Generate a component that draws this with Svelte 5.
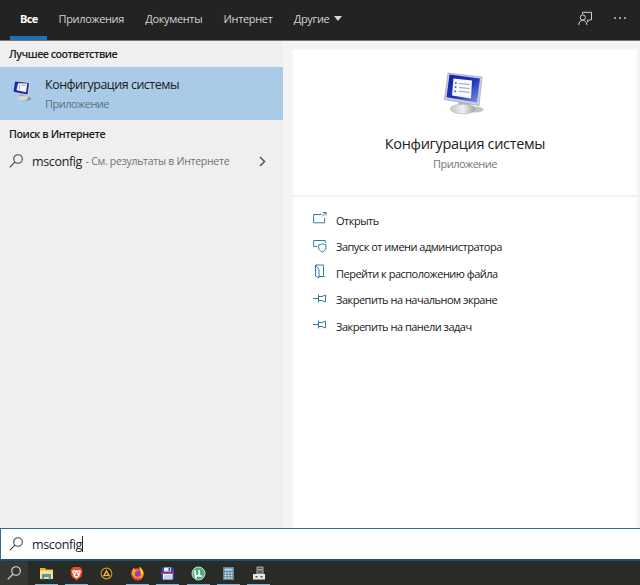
<script>
  const tabs = ['Приложения', 'Документы', 'Интернет'];

  const actions = [
    { icon: 'open', label: 'Открыть' },
    { icon: 'shield', label: 'Запуск от имени администратора' },
    { icon: 'folder', label: 'Перейти к расположению файла' },
    { icon: 'pin', label: 'Закрепить на начальном экране' },
    { icon: 'pin', label: 'Закрепить на панели задач' }
  ];

  const apps = [
    { name: 'explorer', running: true },
    { name: 'brave', running: true },
    { name: 'aimp', running: false },
    { name: 'firefox', running: true },
    { name: 'commander', running: true },
    { name: 'utorrent', running: true },
    { name: 'calc', running: true },
    { name: 'usb', running: true }
  ];
</script>

{#snippet magnifier(size)}
  <svg class="magnifier" width={size} height={size} viewBox="0 0 14 14">
    <circle cx="9" cy="5" r="4.3" />
    <path d="M5.9 8.1 .7 13.3" />
  </svg>
{/snippet}

<div class="search">
  <header>
    <nav>
      <span class="tab active">Все</span>
      {#each tabs as tab}
        <span class="tab">{tab}</span>
      {/each}
      <span class="tab more">Другие <i></i></span>
    </nav>
    <div class="tools">
      <svg width="15" height="15" viewBox="0 0 15 15">
        <path d="M4.5 3.5V1.3h9v7.4H12l-2.300 2V8.300" />
        <circle cx="4.800" cy="6.500" r="2.600" />
        <path d="M.7 14c.2-3 1.800-4.700 4.100-4.700S8.700 11 8.900 14" />
      </svg>
      <svg class="dots" width="14" height="4" viewBox="0 0 14 4">
        <circle cx="2" cy="2" r=".9" /><circle cx="7" cy="2" r=".9" /><circle cx="12" cy="2" r=".9" />
      </svg>
    </div>
  </header>

  <main>
    <section class="results">
      <h3>Лучшее соответствие</h3>
      <div class="result selected">
        <svg class="small-monitor" width="20" height="22" viewBox="0 0 20 22">
          <ellipse cx="15" cy="18.800" rx="4" ry="1.800" fill="#8b8e90" />
          <path d="M7 14h6l-.5 4H8z" fill="#a9adb2" />
          <ellipse cx="11" cy="18" rx="5" ry="2" fill="#d3d5d6" />
          <path d="M2.500 1 18.500 2 17 16 1 12.500z" fill="#c8d0e4" />
          <path d="M3 1.500 17 3 15.500 14.500 1.500 11.800z" fill="#1c2c9c" />
          <path d="M6 3.200 15.300 3.500 14 12.300 4.500 10.300z" fill="#f0f4fc" />
          <path d="M7.500 5v4.500M9.500 5.300h4" stroke="#9aa8d4" />
        </svg>
        <div>
          <div class="name">Конфигурация системы</div>
          <div class="kind">Приложение</div>
        </div>
      </div>
      <h3 class="web">Поиск в Интернете</h3>
      <div class="result suggestion">
        {@render magnifier(14)}
        <span class="query">msconfig</span>
        <span class="hint">- См. результаты в Интернете</span>
        <svg class="chevron" width="7" height="11" viewBox="0 0 7 11"><path d="m1 1 4.500 4.500L1 10" /></svg>
      </div>
    </section>

    <section class="details">
      <div class="hero">
        <svg width="42" height="44" viewBox="0 0 42 44">
          <defs>
            <linearGradient id="screen" x1="0" y1="0" x2="1" y2="1">
              <stop offset="0" stop-color="#1420a0" />
              <stop offset=".55" stop-color="#2438bc" />
              <stop offset="1" stop-color="#8298e8" />
            </linearGradient>
            <linearGradient id="stand" x1="0" y1="0" x2="1" y2="0">
              <stop offset="0" stop-color="#c4c6c8" />
              <stop offset=".5" stop-color="#f0f0f0" />
              <stop offset="1" stop-color="#a0a2a4" />
            </linearGradient>
          </defs>
          <ellipse cx="33" cy="37.500" rx="7.500" ry="3" fill="#777" opacity=".45" />
          <path d="M15 28h13l-1 8H16z" fill="#b9bcbf" />
          <ellipse cx="20" cy="37" rx="12.500" ry="4.800" fill="url(#stand)" stroke="#b4b6b8" stroke-width=".7" />
          <path d="M5 1 39 5 36 33.500 1.500 27.500z" fill="#c9cfe0" stroke="#9da3b8" stroke-width=".7" />
          <path d="M6.500 2.500 37 6.500 34 30.500 3.500 25.300z" fill="url(#screen)" />
          <path d="M10.500 6.500 29 8.500 28 26.500 9 23.500z" fill="#f7faff" />
          <path d="m16 11.500 10.500 1m-10.500 3 10.500 1m-10.500 2.800 10.500 1" stroke="#8d98a6" stroke-width=".9" />
          <path d="m12 11 1.700.2m-2 3.800 1.700.2m-2 4 1.700.3" stroke="#3b5bc4" stroke-width="1.700" />
        </svg>
        <h2>Конфигурация системы</h2>
        <p>Приложение</p>
      </div>
      <ul>
        {#each actions as action}
          <li>
            <svg width="14" height="15" viewBox="0 0 14 15">
              {#if action.icon === 'open'}
                <path d="M8.500 3.500H.6v8.300h11V7M9 5.500l3.700-3.700M10 1.500h3v3" />
              {:else if action.icon === 'shield'}
                <path d="M4 8.500H.6V2.500h11.600V5M9.300 5.800c1.200.8 2.400 1 3.700 1v2.700c0 2.300-1.500 3.500-3.700 4.500-2.200-1-3.700-2.200-3.700-4.500V6.800c1.300 0 2.500-.2 3.700-1z" />
              {:else if action.icon === 'folder'}
                <path d="M2.500 1h8v10.500l1 1H6M2.500 1v11l3.500 2V5.500L2.500 1z" />
              {:else}
                <path d="M0 7.500h5M5.500 3.500v8M5.500 5.500h3.500l3.500-1.500v7l-3.500-1.500H5.500" />
              {/if}
            </svg>
            <span>{action.label}</span>
          </li>
        {/each}
      </ul>
    </section>
  </main>

  <div class="field">
    {@render magnifier(14)}
    <span>msconfig</span><i></i>
  </div>

  <footer>
    <div class="start">{@render magnifier(14)}</div>
    {#each apps as app}
      <div class="app" class:running={app.running}>
        <svg width="15" height="15" viewBox="0 0 15 15">
          {#if app.name === 'explorer'}
            <path d="M1 2h5l1 1.500h7V13H1z" fill="#e4b53d" />
            <path d="M1 4.500h13V13H1z" fill="#ffe084" />
            <path d="M3 8h9v5.500H9.700V11H5.300v2.500H3z" fill="#489bc3" />
          {:else if app.name === 'brave'}
            <path d="m4 1 7 0 2.500 3-1 6.500-5 4-5-4-1-6.500z" fill="#ef4c2d" />
            <path d="m4 4 2 .5L7.500 4 9 4.500l2-.5 1 2-1.500 2.500.3 1.500-3.300 2.500L4.200 10l.3-1.500L3 6z" fill="#fff0e8" />
            <path d="m4.500 6 2 .8M10.500 6l-2 .8M6 9.500l1.500-.7 1.500.7M7.500 7v2" stroke="#ef4c2d" stroke-width=".9" />
          {:else if app.name === 'aimp'}
            <circle cx="7.500" cy="7.500" r="5.300" fill="#211a0c" stroke="#c8983a" stroke-width="1.200" />
            <path d="M7.500 4.800 10 9.500H5z" fill="none" stroke="#efb434" stroke-width="1.500" />
          {:else if app.name === 'firefox'}
            <circle cx="7.500" cy="8.300" r="6" fill="#fa552b" />
            <path d="M1.500 8C1.500 5 2.700 3 4 1.700L5 4l3 1-3 3.500 2.500 3 4-2.500-1-4L9 .8C12.500 3 14 6 13.500 9c-.7 3.500-3 5.300-6 5.300" fill="#ff9d20" />
            <path d="M9 .8C11.500 4 11 6 11.500 9l1.800-2C13 4 11 2 9 .8z" fill="#ffe448" />
            <circle cx="7.500" cy="8" r="2.700" fill="#8a40c4" />
            <path d="M2 9c.5 3 2.800 5.300 5.500 5.300 2 0 4-1 5-3-4 1.500-8 1.200-10.500-2.300z" fill="#ee3759" />
          {:else if app.name === 'commander'}
            <path d="M1.500 1.500h11L14 3v10.500H1.500z" fill="#304bad" />
            <path d="M4 1.500h7v4H4zM3 8h9.500v5.500H3z" fill="#eef0fb" />
            <path d="M8.500 2h1.700v3H8.500z" fill="#304bad" />
            <path d="M1 7.300h13" stroke="#d5485d" stroke-width="1.200" />
            <path d="M4 10h7.500M4 12h7.500" stroke="#8998d0" stroke-width=".7" />
          {:else if app.name === 'utorrent'}
            <circle cx="7.500" cy="7.500" r="6.500" fill="#4aae76" stroke="#d4eee0" stroke-width=".9" />
            <path d="M4 4.200v3.300c0 2.500 3.200 3.300 4.200.8V4v4.500c0 1.800 1.200 2.200 3 1.400M4.500 9.500l.8 2.800" fill="none" stroke="#fff" stroke-width="1.700" />
          {:else if app.name === 'calc'}
            <path d="M2 1h11v13H2z" fill="#60849a" />
            <path d="M3.500 2.500h8v2.300h-8z" fill="#a9d4e9" />
            <path d="M3.500 7h8M3.500 9.500h8M3.500 12h8" stroke="#d4e2ea" stroke-width="1.500" stroke-dasharray="2 1" />
          {:else}
            <path d="M6 1h6v7H6z" fill="#5d605f" stroke="#b8bab9" stroke-width=".9" />
            <path d="M7.500 3h1v1.500h-1zm2 0h1v1.500h-1z" fill="#ddd" />
            <path d="M2 8h12v5.500H2z" fill="#e8e8e6" />
            <path d="M4.500 10h2v1.500h-2zm5 0h2v1.500h-2z" fill="#4d504e" />
          {/if}
        </svg>
      </div>
    {/each}
  </footer>
</div>

<style>
  .search {
    display: flex;
    flex-direction: column;
    width: 640px;
    height: 585px;
    overflow: hidden;
    background: #f4f4f4;
    color: #202020;
    font-family: 'Open Sans', 'Noto Sans', sans-serif;
    font-size: 11px;
    white-space: nowrap;
  }

  svg {
    display: block;
    flex: none;
  }

  h2, h3, p, ul {
    margin: 0;
    padding: 0;
  }

  header {
    display: flex;
    justify-content: space-between;
    flex: none;
    height: 40px;
    background: #232323;
    border-bottom: 1px solid #77777a;
    color: #d2d2d2;
  }

  nav {
    display: flex;
    padding-left: 10px;
    letter-spacing: -0.35px;
  }

  .tab {
    box-sizing: border-box;
    height: 40px;
    line-height: 37px;
    margin-right: 21.3px;
  }

  .tab.active {
    width: 37px;
    margin-right: 11.5px;
    padding-left: 10px;
    border-bottom: 4px solid #1e6fb4;
    color: #fff;
    font-weight: 700;
    letter-spacing: -0.6px;
  }

  .tab.more {
    display: flex;
    align-items: center;
    gap: 5px;
    height: 37px;
  }

  .more i {
    border: 4px solid transparent;
    border-top: 5px solid #d8d8d8;
    border-bottom: 0;
  }

  .tools {
    display: flex;
    gap: 20px;
    padding: 11px 13px 0 0;
    fill: none;
    stroke: #d0d0d0;
  }

  .dots {
    margin-top: 5px;
    fill: #d8d8d8;
    stroke: none;
  }

  main {
    display: flex;
    flex: 1;
    min-height: 0;
  }

  .results {
    width: 283px;
    background: #efefef;
  }

  h3 {
    padding-left: 9px;
    font-size: 10.7px;
    font-weight: 600;
    line-height: 26px;
    letter-spacing: -0.5px;
  }

  .result {
    display: flex;
    align-items: center;
  }

  .selected {
    height: 53px;
    padding-left: 12px;
    gap: 13px;
    background: #a9cbe7;
  }

  .small-monitor {
    margin-top: -5px;
  }

  .name {
    font-size: 12.5px;
    line-height: 19px;
    letter-spacing: -0.48px;
  }

  .kind {
    margin-top: 1px;
    color: #5c7080;
    line-height: 18px;
    letter-spacing: -0.5px;
  }

  .web {
    margin-top: 1px;
    letter-spacing: -0.42px;
  }

  .suggestion {
    height: 28px;
    padding-left: 9px;
  }

  .magnifier {
    fill: none;
    stroke: #454545;
    stroke-width: 1.1;
  }

  .query {
    margin-left: 9px;
    font-size: 12.5px;
    letter-spacing: -0.35px;
  }

  .hint {
    margin-left: 3.5px;
    color: #727272;
    font-size: 10.5px;
    letter-spacing: -0.27px;
  }

  .chevron {
    margin-left: auto;
    margin-right: 17px;
    fill: none;
    stroke: #555;
    stroke-width: 1.5;
  }

  .details {
    width: 344px;
    margin: 9px 3px 0 10px;
    background: #fff;
  }

  .hero {
    display: flex;
    flex-direction: column;
    align-items: center;
    height: 145px;
    border-bottom: 2px solid #f2f2f2;
  }

  .hero svg {
    margin: 22px 3px 0 0;
  }

  h2 {
    margin-top: 17px;
    font-size: 14.5px;
    font-weight: 400;
    line-height: 21px;
    letter-spacing: -0.32px;
  }

  .hero p {
    margin-top: 1px;
    color: #777;
    line-height: 18px;
    letter-spacing: -0.5px;
  }

  ul {
    padding: 10px 0 0 20px;
    list-style: none;
  }

  li {
    display: flex;
    align-items: center;
    gap: 9px;
    height: 26.5px;
    letter-spacing: -0.5px;
  }

  li svg {
    margin-top: -3px;
    fill: none;
    stroke: #347f98;
  }

  .field {
    display: flex;
    align-items: center;
    flex: none;
    height: 30px;
    padding-left: 8px;
    border: 1px solid #28728f;
    border-right: 0;
    border-bottom: 2px solid #175272;
    background: #fff;
    font-size: 12.5px;
    letter-spacing: -0.35px;
  }

  .field span {
    margin-left: 9px;
  }

  .field i {
    width: 1px;
    height: 16px;
    background: #222;
  }

  footer {
    display: flex;
    flex: none;
    height: 24px;
    background: #292c26;
  }

  .start {
    width: 28px;
    margin-right: 3px;
    padding: 5px 0 0 7px;
    box-sizing: border-box;
    background: #353833;
  }

  .start .magnifier {
    stroke: #e2e2e2;
  }

  .app {
    display: flex;
    justify-content: center;
    box-sizing: border-box;
    width: 23px;
    margin: 0 3.7px;
    padding-top: 5px;
  }

  .running {
    border-bottom: 1px solid #88b4d4;
  }
</style>
